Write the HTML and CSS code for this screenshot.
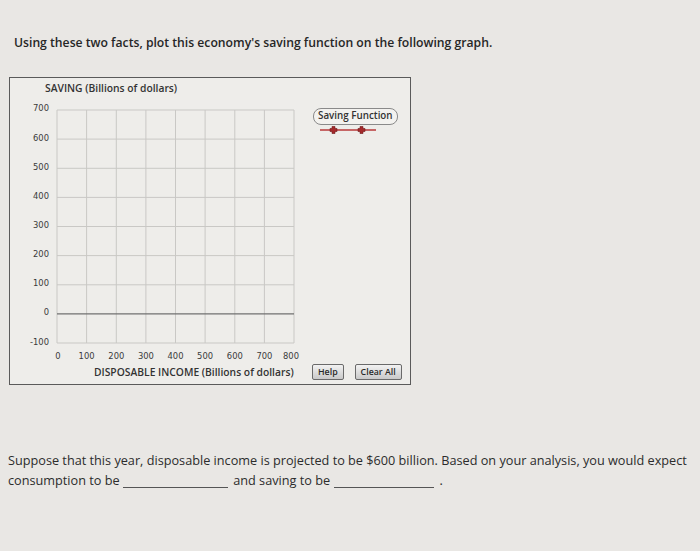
FILE: index.html
```html
<!DOCTYPE html>
<html>
<head>
<meta charset="utf-8">
<link rel="stylesheet" href="styles.css">
</head>
<body>
<div class="page">
  <p class="intro">Using these two facts, plot this economy's saving function on the following graph.</p>
  <div class="graph-box">
    <svg class="chart" width="300" height="306" viewBox="0 0 300 306">
      <text class="axis-title" x="35" y="14">SAVING (Billions of dollars)</text>
      <g class="grid">
        <line x1="47" y1="32" x2="47" y2="265"/>
        <line x1="76.6" y1="32" x2="76.6" y2="265"/>
        <line x1="106.3" y1="32" x2="106.3" y2="265"/>
        <line x1="135.9" y1="32" x2="135.9" y2="265"/>
        <line x1="165.5" y1="32" x2="165.5" y2="265"/>
        <line x1="195.1" y1="32" x2="195.1" y2="265"/>
        <line x1="224.8" y1="32" x2="224.8" y2="265"/>
        <line x1="254.4" y1="32" x2="254.4" y2="265"/>
        <line x1="284" y1="32" x2="284" y2="265"/>
        <line x1="47" y1="32" x2="284" y2="32"/>
        <line x1="47" y1="61.1" x2="284" y2="61.1"/>
        <line x1="47" y1="90.3" x2="284" y2="90.3"/>
        <line x1="47" y1="119.4" x2="284" y2="119.4"/>
        <line x1="47" y1="148.5" x2="284" y2="148.5"/>
        <line x1="47" y1="177.6" x2="284" y2="177.6"/>
        <line x1="47" y1="206.8" x2="284" y2="206.8"/>
        <line x1="47" y1="265" x2="284" y2="265"/>
      </g>
      <line class="zero" x1="47" y1="235.9" x2="284" y2="235.9"/>
      <g class="ylabels">
        <text x="39" y="30">700</text>
        <text x="39" y="60">600</text>
        <text x="39" y="89.2">500</text>
        <text x="39" y="118.4">400</text>
        <text x="39" y="147.5">300</text>
        <text x="39" y="176.6">200</text>
        <text x="39" y="205.8">100</text>
        <text x="39" y="234.9">0</text>
        <text x="39" y="264">-100</text>
      </g>
      <g class="xlabels">
        <text x="48" y="281">0</text>
        <text x="76.6" y="281">100</text>
        <text x="106.3" y="281">200</text>
        <text x="135.9" y="281">300</text>
        <text x="165.5" y="281">400</text>
        <text x="195.1" y="281">500</text>
        <text x="224.8" y="281">600</text>
        <text x="254.4" y="281">700</text>
        <text x="281" y="281">800</text>
      </g>
      <text class="axis-title" x="84" y="298">DISPOSABLE INCOME (Billions of dollars)</text>
    </svg>
    <div class="side">
      <div class="legend">
        <span class="pill">Saving Function</span>
        <svg class="marker" width="60" height="10" viewBox="0 0 60 10">
          <line x1="2" y1="5" x2="58" y2="5" stroke="#b8393a" stroke-width="1.6"/>
          <g fill="#a52a2c" stroke="#6e1a1a" stroke-width="0.6">
            <path d="M14 1.5h3v2h2v3h-2v2h-3v-2h-2v-3h2z"/>
            <path d="M42 1.5h3v2h2v3h-2v2h-3v-2h-2v-3h2z"/>
          </g>
        </svg>
      </div>
      <div class="buttons">
        <button class="btn">Help</button>
        <button class="btn">Clear All</button>
      </div>
    </div>
  </div>
  <div class="question">
    <p>Suppose that this year, disposable income is projected to be $600 billion. Based on your analysis, you would expect</p>
    <p>consumption to be <span class="blank blank-1"></span> and saving to be <span class="blank blank-2"></span> .</p>
  </div>
</div>
</body>
</html>
```
FILE: styles.css
```css
html, body {
  margin: 0;
  padding: 0;
}
body {
  background: #e9e7e4;
  font-family: "Open Sans", "DejaVu Sans", sans-serif;
  color: #2a2a2a;
  width: 700px;
  height: 551px;
  overflow: hidden;
}
.page {
  padding: 34px 0 0 0;
}
.intro {
  margin: 0 0 0 14px;
  font-size: 12.2px;
  font-weight: 600;
  line-height: 17px;
  color: #262626;
}
.graph-box {
  margin: 26px 0 0 9px;
  width: 400px;
  height: 306px;
  border: 1px solid #5a5a5a;
  background: #eeedea;
  display: flex;
}
.chart {
  display: block;
  flex: none;
}
.grid line {
  stroke: #c9c8c5;
  stroke-width: 1;
}
.zero {
  stroke: #707070;
  stroke-width: 1.2;
}
.axis-title {
  font-family: "Open Sans", "DejaVu Sans", sans-serif;
  font-size: 10.3px;
  font-weight: 600;
  fill: #333;
}
.ylabels text {
  font-family: "DejaVu Sans", sans-serif;
  font-size: 8.4px;
  fill: #3a3a3a;
  text-anchor: end;
  dominant-baseline: middle;
}
.xlabels text {
  font-family: "DejaVu Sans", sans-serif;
  font-size: 8.4px;
  fill: #3a3a3a;
  text-anchor: middle;
}
.side {
  flex: 1;
  display: flex;
  flex-direction: column;
  justify-content: space-between;
  padding: 30px 0 4px 2px;
}
.legend {
  display: flex;
  flex-direction: column;
  align-items: flex-start;
  padding-left: 1px;
}
.pill {
  display: inline-block;
  border: 1px solid #8a8a8a;
  border-radius: 8px;
  padding: 1px 4px 2px 4px;
  font-size: 9.8px;
  font-weight: 600;
  line-height: 12px;
  color: #333;
  background: #f3f2ef;
}
.marker {
  display: block;
  margin: 0 0 0 5px;
}
.buttons {
  display: flex;
  gap: 11px;
}
.btn {
  font-family: "Open Sans", "DejaVu Sans", sans-serif;
  font-size: 8.8px;
  font-weight: 600;
  color: #2a2a2a;
  background: linear-gradient(#f2f2f2, #c9c9c9);
  border: 1px solid #6a6a6a;
  border-radius: 2px;
  padding: 1px 5px;
  line-height: 12px;
  margin: 0;
}
.question {
  margin: 65px 0 0 8px;
  font-size: 12.7px;
  line-height: 20px;
  color: #2c2c2c;
}
.question p {
  margin: 0;
}
.blank {
  display: inline-block;
  border-bottom: 1px solid #555;
  height: 12px;
  vertical-align: -3px;
}
.blank-1 {
  width: 105px;
  margin: 0 2px 0 0;
}
.blank-2 {
  width: 100px;
  margin: 0 2px 0 1px;
}
```
